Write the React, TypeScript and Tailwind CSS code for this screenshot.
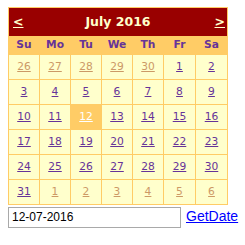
const dayNames = ['Su', 'Mo', 'Tu', 'We', 'Th', 'Fr', 'Sa'];

type Day = { n: number; other?: boolean; today?: boolean };

function buildWeeks(): Day[][] {
  const days: Day[] = [];
  for (let n = 26; n <= 30; n++) days.push({ n, other: true });
  for (let n = 1; n <= 31; n++) days.push({ n, today: n === 12 });
  for (let n = 1; n <= 6; n++) days.push({ n, other: true });
  const weeks: Day[][] = [];
  for (let i = 0; i < days.length; i += 7) weeks.push(days.slice(i, i + 7));
  return weeks;
}

const cols = 'grid grid-cols-[30px_30px_30px_30px_30px_31px_31px] gap-px';

function DayCell({ day }: { day: Day }) {
  const bg = day.today ? 'bg-[#ffcc66]' : 'bg-[#ffffcc]';
  const color = day.today ? 'text-white' : day.other ? 'text-[#cc9966]' : 'text-[#663399]';
  return (
    <div className={`flex h-[24px] items-center justify-center ${bg}`}>
      <a href="#" className={`underline ${color}`}>
        {day.n}
      </a>
    </div>
  );
}

export default function App() {
  const weeks = buildWeeks();

  return (
    <div className="h-[245px] w-[245px] bg-white pl-2 pt-[7px]">
      <div className="w-[220px] border border-[#ffcc66] bg-[#ffcc66] font-['DejaVu_Sans',Verdana,sans-serif] text-[10.67px] leading-none">
        <div className="flex h-[28px] items-center bg-[#990000] text-[12.5px] font-bold text-[#ffffcc]">
          <div className="w-[15%] pl-1">
            <a href="#" className="underline">
              &lt;
            </a>
          </div>
          <div className="flex-1 text-center">July 2016</div>
          <div className="w-[15%] pr-[2px] text-right">
            <a href="#" className="underline">
              &gt;
            </a>
          </div>
        </div>

        <div className={`${cols} h-[18px] items-center font-bold text-[#663399]`}>
          {dayNames.map((d) => (
            <div key={d} className="text-center">
              {d}
            </div>
          ))}
        </div>

        <div className={`${cols} mt-px`}>
          {weeks.flat().map((day, i) => (
            <DayCell key={i} day={day} />
          ))}
        </div>
      </div>

      <div className="mt-px flex items-baseline gap-[5px]">
        <input
          type="text"
          defaultValue="12-07-2016"
          className="h-[21px] w-[173px] border border-[#a9a9a9] px-[3px] font-['Liberation_Sans',Arial,sans-serif] text-[12px] text-black outline-none"
        />
        <a href="#" className="font-['Liberation_Sans',Arial,sans-serif] text-[14px] text-[#0000ff] underline">
          GetDate
        </a>
      </div>
    </div>
  );
}
